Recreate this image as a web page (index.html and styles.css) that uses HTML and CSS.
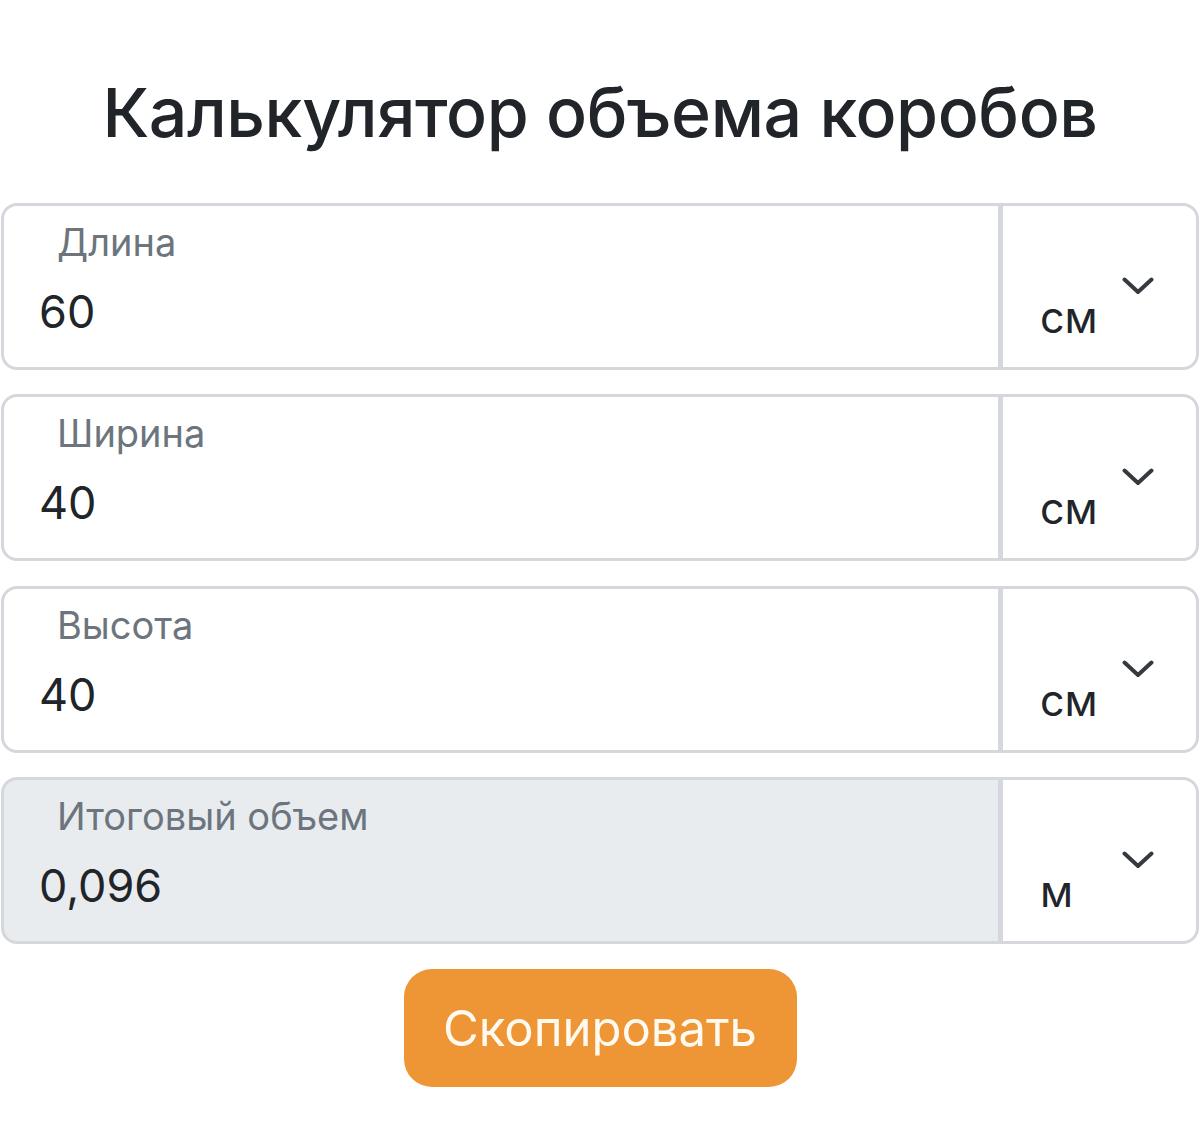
FILE: index.html
```html
<!DOCTYPE html>
<html lang="ru">
<head>
<meta charset="utf-8">
<title>Калькулятор объема коробов</title>
<link rel="stylesheet" href="styles.css">
</head>
<body>
<main class="page">
  <h1 class="title">Калькулятор объема коробов</h1>
  <div class="form">
    <div class="group">
      <div class="field">
        <div class="label">Длина</div>
        <div class="value">60</div>
      </div>
      <div class="unit">
        <span class="unit-text">см</span>
        <svg class="chevron" viewBox="0 0 32 18" width="32" height="18"><path d="M2.5 2.5 L16 15 L29.5 2.5" fill="none" stroke="#343a40" stroke-width="4" stroke-linecap="round" stroke-linejoin="round"/></svg>
      </div>
    </div>
    <div class="group">
      <div class="field">
        <div class="label">Ширина</div>
        <div class="value">40</div>
      </div>
      <div class="unit">
        <span class="unit-text">см</span>
        <svg class="chevron" viewBox="0 0 32 18" width="32" height="18"><path d="M2.5 2.5 L16 15 L29.5 2.5" fill="none" stroke="#343a40" stroke-width="4" stroke-linecap="round" stroke-linejoin="round"/></svg>
      </div>
    </div>
    <div class="group">
      <div class="field">
        <div class="label">Высота</div>
        <div class="value">40</div>
      </div>
      <div class="unit">
        <span class="unit-text">см</span>
        <svg class="chevron" viewBox="0 0 32 18" width="32" height="18"><path d="M2.5 2.5 L16 15 L29.5 2.5" fill="none" stroke="#343a40" stroke-width="4" stroke-linecap="round" stroke-linejoin="round"/></svg>
      </div>
    </div>
    <div class="group">
      <div class="field readonly">
        <div class="label">Итоговый объем</div>
        <div class="value">0,096</div>
      </div>
      <div class="unit">
        <span class="unit-text">м</span>
        <svg class="chevron" viewBox="0 0 32 18" width="32" height="18"><path d="M2.5 2.5 L16 15 L29.5 2.5" fill="none" stroke="#343a40" stroke-width="4" stroke-linecap="round" stroke-linejoin="round"/></svg>
      </div>
    </div>
  </div>
  <div class="actions">
    <button class="copy-btn" type="button">Скопировать</button>
  </div>
</main>
</body>
</html>
```
FILE: styles.css
```css
* { box-sizing: border-box; }
html, body { margin: 0; padding: 0; background: #fff; }
body {
  font-family: Inter, "Noto Sans", "Liberation Sans", sans-serif;
  color: #212529;
}
.page {
  width: 1200px;
  padding-top: 70px;
}
.title {
  margin: 0 0 49px;
  text-align: center;
  font-size: 68px;
  font-weight: 500;
  line-height: 84px;
  color: #212529;
  letter-spacing: -0.4px;
}
.form {
  display: flex;
  flex-direction: column;
  gap: 24.4px;
  padding: 0 1px 0 1px;
}
.group {
  display: flex;
  height: 167px;
}
.field {
  flex: 1;
  border: 3px solid #d4d7db;
  border-radius: 16px 0 0 16px;
  background: #fff;
  padding: 17px 0 0 35px;
}
.field.readonly { background: #e9ecef; }
.label {
  font-size: 38px;
  line-height: 38px;
  color: #6c757d;
  padding-left: 18px;
}
.value {
  margin-top: 28px;
  font-size: 45px;
  line-height: 45px;
  color: #212529;
}
.unit {
  width: 198px;
  border: 3px solid #d4d7db;
  border-left-width: 2px;
  border-radius: 0 16px 16px 0;
  background: #fff;
  display: flex;
  justify-content: space-between;
  align-items: flex-start;
  padding: 0 42px 0 37px;
}
.unit-text {
  margin-top: 90px;
  font-size: 43px;
  line-height: 43px;
  color: #212529;
}
.chevron {
  margin-top: 71px;
  display: block;
}
.actions {
  display: flex;
  justify-content: center;
  padding-top: 25px;
}
.copy-btn {
  width: 393px;
  height: 118px;
  border: none;
  border-radius: 28px;
  background: #ee9535;
  color: #fffaf0;
  font-family: Inter, "Noto Sans", "Liberation Sans", sans-serif;
  font-size: 49px;
  padding: 0;
}
```
